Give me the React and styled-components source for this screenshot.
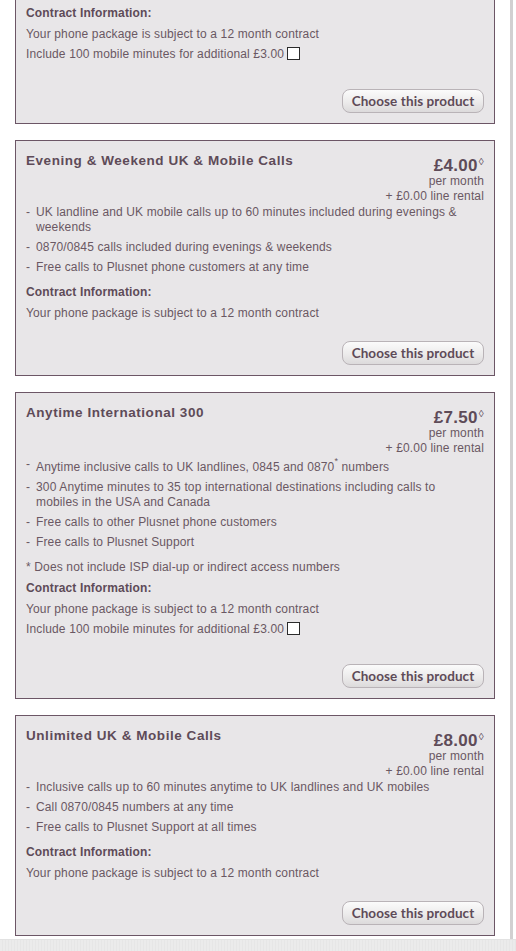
import styled, { createGlobalStyle } from "styled-components";

const GlobalStyle = createGlobalStyle`
  html, body {
    margin: 0;
    padding: 0;
    background: #ffffff;
  }
  body {
    font-family: "Liberation Sans", Arial, sans-serif;
    font-size: 12px;
    letter-spacing: 0.14px;
    color: #6a5863;
  }
`;

const Page = styled.div`
  display: flex;
  flex-direction: column;
  width: 516px;
  height: 951px;
  overflow: hidden;
`;

const Main = styled.div`
  display: flex;
  flex: 1;
  min-height: 0;
`;

const Column = styled.div`
  display: flex;
  flex-direction: column;
  gap: 16px;
  width: 480px;
  padding: 0 15px 4px;
  border-right: 3px solid #d2d0d1;
`;

const Footer = styled.div`
  height: 11px;
  flex-shrink: 0;
  background: repeating-linear-gradient(
    90deg,
    #ebebeb 0,
    #ebebeb 2px,
    #e6e6e6 2px,
    #e6e6e6 3px
  );
  border-top: 1px solid #e2e2e2;
`;

const Card = styled.section`
  display: flex;
  flex-direction: column;
  background: #e8e6e8;
  border: 1px solid #6c5666;
  border-top: ${({ $cut }) => ($cut ? "none" : "1px solid #6c5666")};
  padding: ${({ $cut }) => ($cut ? "5.5px 10px 10px" : "11px 10px 10px")};
`;

const Header = styled.div`
  display: flex;
  justify-content: space-between;
  align-items: flex-start;
`;

const Title = styled.h3`
  margin: 1px 0 0;
  font-size: 13.5px;
  letter-spacing: 0.55px;
  line-height: 16px;
  font-weight: bold;
  color: #5e4b58;
`;

const PriceBlock = styled.div`
  display: flex;
  flex-direction: column;
  align-items: flex-end;
  margin-top: 4px;
  line-height: 15px;
`;

const Price = styled.div`
  margin: 1px 0 -1px;
  font-size: 17px;
  line-height: 18px;
  font-weight: bold;
  letter-spacing: 0.3px;
  color: #5e4b58;

  sup {
    font-size: 10px;
    font-weight: normal;
    vertical-align: top;
    line-height: 10px;
    margin-left: 1px;
  }
`;

const List = styled.ul`
  list-style: none;
  margin: 1px 0 5px;
  padding: 0 12px 0 0;
`;

const Item = styled.li`
  position: relative;
  padding-left: 10px;
  line-height: 15px;
  margin-bottom: 5px;

  &::before {
    content: "-";
    position: absolute;
    left: 0;
    top: 0;
  }

  sup {
    font-size: 9px;
    line-height: 1;
    vertical-align: 6.5px;
  }
`;

const Text = styled.p`
  margin: 0 0 ${({ $gap }) => $gap ?? 5}px;
  line-height: 15px;
  font-weight: ${({ $bold }) => ($bold ? "bold" : "normal")};
  color: ${({ $bold }) => ($bold ? "#5e4b58" : "#6a5863")};
`;

const Box = styled.span`
  display: inline-block;
  width: 11px;
  height: 11px;
  border: 1px solid #2b2b2b;
  background: #ffffff;
  margin-left: 3px;
  vertical-align: -2px;
`;

const Actions = styled.div`
  display: flex;
  justify-content: flex-end;
  margin-top: ${({ $tall }) => ($tall ? 22.5 : 15)}px;
`;

const Button = styled.button`
  height: 24px;
  width: 142px;
  padding: 0;
  border: 1px solid #b9b3b7;
  border-radius: 8px;
  background: linear-gradient(#fbfbfb, #ecebeb 55%, #dcdadb);
  font-family: Lato, "Liberation Sans", sans-serif;
  font-weight: bold;
  font-size: 13.5px;
  letter-spacing: 0.1px;
  color: #5e4b58;
  cursor: pointer;
`;

const Contract = ({ extra }) => (
  <>
    <Text $bold $gap={6}>Contract Information:</Text>
    <Text>Your phone package is subject to a 12 month contract</Text>
    {extra && (
      <Text>
        Include 100 mobile minutes for additional £3.00
        <Box />
      </Text>
    )}
    <Actions $tall={extra}>
      <Button>Choose this product</Button>
    </Actions>
  </>
);

const Product = ({ title, price, items, note, extra }) => (
  <Card>
    <Header>
      <Title>{title}</Title>
      <PriceBlock>
        <Price>
          {price}
          <sup>◊</sup>
        </Price>
        <span>per month</span>
        <span>+ £0.00 line rental</span>
      </PriceBlock>
    </Header>
    <List>
      {items.map((item, i) => (
        <Item key={i}>{item}</Item>
      ))}
    </List>
    {note && <Text $gap={6}>{note}</Text>}
    <Contract extra={extra} />
  </Card>
);

const App = () => {
  return (
    <Page>
      <GlobalStyle />
      <Main>
        <Column>
          <Card $cut>
            <Contract extra />
          </Card>

          <Product
            title="Evening & Weekend UK & Mobile Calls"
            price="£4.00"
            items={[
              "UK landline and UK mobile calls up to 60 minutes included during evenings & weekends",
              "0870/0845 calls included during evenings & weekends",
              "Free calls to Plusnet phone customers at any time",
            ]}
          />

          <Product
            title="Anytime International 300"
            price="£7.50"
            items={[
              <>
                Anytime inclusive calls to UK landlines, 0845 and 0870<sup>*</sup> numbers
              </>,
              "300 Anytime minutes to 35 top international destinations including calls to mobiles in the USA and Canada",
              "Free calls to other Plusnet phone customers",
              "Free calls to Plusnet Support",
            ]}
            note="* Does not include ISP dial-up or indirect access numbers"
            extra
          />

          <Product
            title="Unlimited UK & Mobile Calls"
            price="£8.00"
            items={[
              "Inclusive calls up to 60 minutes anytime to UK landlines and UK mobiles",
              "Call 0870/0845 numbers at any time",
              "Free calls to Plusnet Support at all times",
            ]}
          />
        </Column>
      </Main>
      <Footer />
    </Page>
  );
};

export default App;
